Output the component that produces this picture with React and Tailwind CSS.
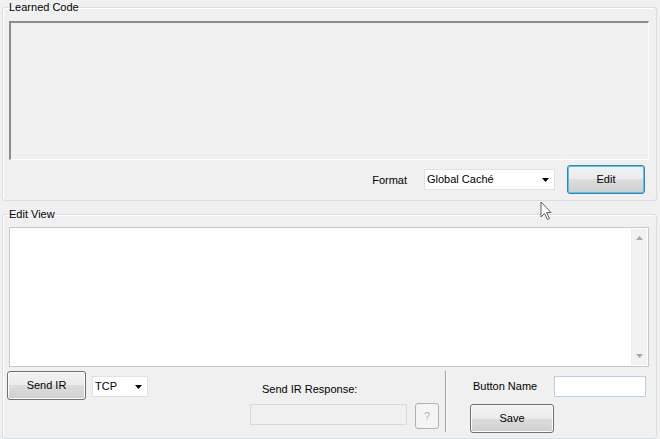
import React from "react";

const btn =
  "flex items-center justify-center rounded-[3px] border border-[#707070] bg-[linear-gradient(to_bottom,#f2f2f2_0%,#ebebeb_50%,#dddddd_50%,#cfcfcf_100%)] shadow-[inset_0_0_0_1px_#fcfcfc] text-black";

function Arrow() {
  return (
    <svg width="7" height="4" viewBox="0 0 7 4" className="block">
      <path d="M0 0H7L3.5 4Z" fill="#000" />
    </svg>
  );
}

export default function App() {
  return (
    <div
      className="relative w-[660px] h-[439px] overflow-hidden bg-[#f0f0f0] text-[11px] text-black"
      style={{ fontFamily: '"Liberation Sans", Arial, sans-serif' }}
    >
      {/* Learned Code group */}
      <fieldset className="ml-[2px] w-[655px] rounded-[3px] border border-[#d5dfe5] shadow-[inset_1px_1px_0_#ffffff] pb-[6px]">
        <legend className="ml-[5px] px-[1px] leading-[14px]">Learned Code</legend>
        <div className="ml-[6px] mt-[7px] w-[640px] h-[139px] border-t-2 border-l-2 border-t-[#8c8c8c] border-l-[#8c8c8c] border-r border-b border-r-[#fdfdfd] border-b-[#fdfdfd] bg-[#f0f0f0]" />
        <div className="mt-[5px] flex h-[29px] items-center justify-end pr-[11px]">
          <span className="mr-[17px] mt-[2px]">Format</span>
          <div className="flex h-[21px] w-[131px] items-center justify-between border border-[#e2e2e2] bg-white pl-[2px] pr-[5px]">
            <span className="-mt-[1px]">Global Caché</span>
            <Arrow />
          </div>
          <div className="ml-[12px] flex h-[29px] w-[78px] items-center justify-center rounded-[3px] border border-[#3c7fb1] bg-[linear-gradient(to_bottom,#f2f2f2_0%,#ebebeb_50%,#dddddd_50%,#cfcfcf_100%)] shadow-[inset_0_0_0_1px_#48c8f8]">
            Edit
          </div>
        </div>
      </fieldset>

      {/* Edit View group */}
      <fieldset className="ml-[2px] mt-[6px] w-[655px] rounded-[3px] border border-[#d5dfe5] shadow-[inset_1px_1px_0_#ffffff] pb-[5px]">
        <legend className="ml-[5px] px-[1px] leading-[14px]">Edit View</legend>
        <div className="ml-[6px] mt-[6px] flex w-[640px] h-[140px] border border-[#c8c8c8] bg-white">
          <div className="flex-1" />
          <div className="mr-[1px] my-[1px] flex w-[16px] flex-col items-center justify-between border-l border-[#ececec] bg-[#f2f2f2] py-[7px]">
            <svg width="7" height="4" viewBox="0 0 7 4" className="block">
              <path d="M3.5 0L7 4H0Z" fill="#a8a8a8" />
            </svg>
            <svg width="7" height="4" viewBox="0 0 7 4" className="block">
              <path d="M0 0H7L3.5 4Z" fill="#a8a8a8" />
            </svg>
          </div>
        </div>

        <div className="mt-[4px] flex items-start">
          <div className={`${btn} ml-[4px] h-[29px] w-[79px]`}>Send IR</div>
          <div className="ml-[6px] mt-[5px] flex h-[21px] w-[56px] items-center justify-between border border-[#e2e2e2] bg-white pl-[2px] pr-[5px]">
            <span>TCP</span>
            <Arrow />
          </div>

          <div className="ml-[102px] flex flex-col">
            <span className="ml-[12px] mt-[12px] leading-[13px]">Send IR Response:</span>
            <div className="mt-[8px] flex items-start">
              <div className="h-[21px] w-[157px] border border-[#d9d9d9] bg-[#f0f0f0]" />
              <div className="ml-[8px] -mt-[1px] flex h-[26px] w-[24px] items-center justify-center rounded-[3px] border border-[#adb2b5] bg-[#f4f4f4] text-[#a8b8c8]">
                ?
              </div>
            </div>
          </div>

          <div className="ml-[6px] h-[61px] w-[2px] border-l border-[#a0a0a0] bg-white" />

          <div className="ml-[23px] flex w-[176px] flex-col">
            <div className="mt-[5px] flex h-[21px] items-center justify-between">
              <span className="ml-[3px] -mt-[1px]">Button Name</span>
              <div className="h-[21px] w-[92px] border border-[#b8cfe6] bg-white" />
            </div>
            <div className={`${btn} mt-[7px] h-[29px] w-[84px]`}>Save</div>
          </div>
        </div>
      </fieldset>

      {/* mouse cursor */}
      <svg
        width="13"
        height="20"
        viewBox="0 0 13 20"
        className="absolute left-[540px] top-[201px]"
      >
        <path
          d="M1 1V16L4.5 12.5L7.5 18.5L9.5 17.5L6.5 11.5H11Z"
          fill="#ffffff"
          stroke="#606060"
          strokeWidth="1"
          strokeLinejoin="round"
        />
      </svg>
    </div>
  );
}
